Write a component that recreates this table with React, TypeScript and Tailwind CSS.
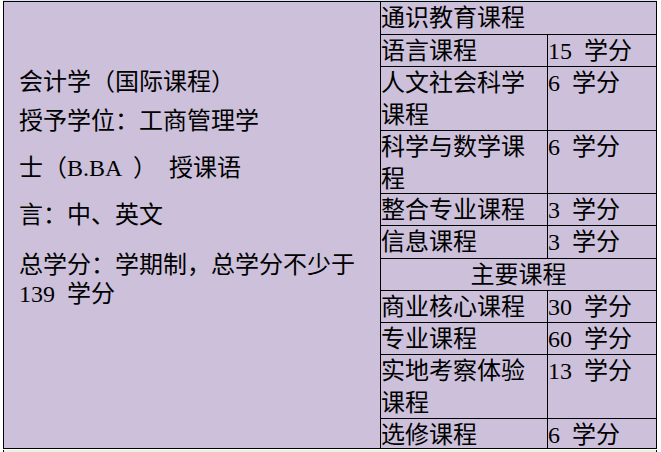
const font = "font-['Liberation_Serif','Noto_Sans_CJK_SC',serif]";

type Row = { name: string; credit?: string; h: string; span?: "left" | "center" };

const rows: Row[] = [
  { name: "通识教育课程", h: "h-[33px]", span: "left" },
  { name: "语言课程", credit: "15 学分", h: "h-[32px]" },
  { name: "人文社会科学课程", credit: "6 学分", h: "h-[64px]" },
  { name: "科学与数学课程", credit: "6 学分", h: "h-[63px]" },
  { name: "整合专业课程", credit: "3 学分", h: "h-[32px]" },
  { name: "信息课程", credit: "3 学分", h: "h-[33px]" },
  { name: "主要课程", h: "h-[32px]", span: "center" },
  { name: "商业核心课程", credit: "30 学分", h: "h-[32px]" },
  { name: "专业课程", credit: "60 学分", h: "h-[32px]" },
  { name: "实地考察体验课程", credit: "13 学分", h: "h-[64px]" },
];

function CourseRow({ row, last }: { row: Row; last?: boolean }) {
  const border = last ? "" : "border-b border-black";
  if (row.span) {
    return (
      <div
        className={`${row.h} ${border} leading-[32px] ${row.span === "center" ? "text-center" : ""}`}
      >
        {row.name}
      </div>
    );
  }
  return (
    <div className={`${row.h} ${border} flex`}>
      <div className="w-[167px] shrink-0 border-r border-black leading-[32px]">{row.name}</div>
      <div className="flex-1 leading-[32px]">{row.credit}</div>
    </div>
  );
}

export default function App() {
  return (
    <div className={`min-h-screen bg-white text-black text-[24px] [word-spacing:6px] ${font}`}>
      <div className="ml-[3px] w-[654px]">
        <div className="h-px bg-[#dbe5f1]" />
        <div className="flex border border-black bg-[#ccc0da]">
          {/* 左侧：专业信息 */}
          <div className="w-[377px] shrink-0 border-r border-black pl-[15px] pt-[64px]">
            <p className="leading-[32px]">会计学（国际课程）</p>
            <p className="leading-[47px]">
              授予学位：工商管理学
              <br />
              士（B.BA ） 授课语
              <br />
              言：中、英文
            </p>
            <p className="mt-[12px] leading-[29px]">
              总学分：学期制，总学分不少于
              <br />
              139 学分
            </p>
          </div>

          {/* 右侧：课程学分 */}
          <div className="flex flex-1 flex-col">
            {rows.map((r) => (
              <CourseRow key={r.name} row={r} />
            ))}
            <CourseRow row={{ name: "选修课程", credit: "6 学分", h: "h-[29px]" }} last />
          </div>
        </div>
        <div className="mt-px h-[3px] border-x border-black bg-[#ebf1de]" />
      </div>
    </div>
  );
}
